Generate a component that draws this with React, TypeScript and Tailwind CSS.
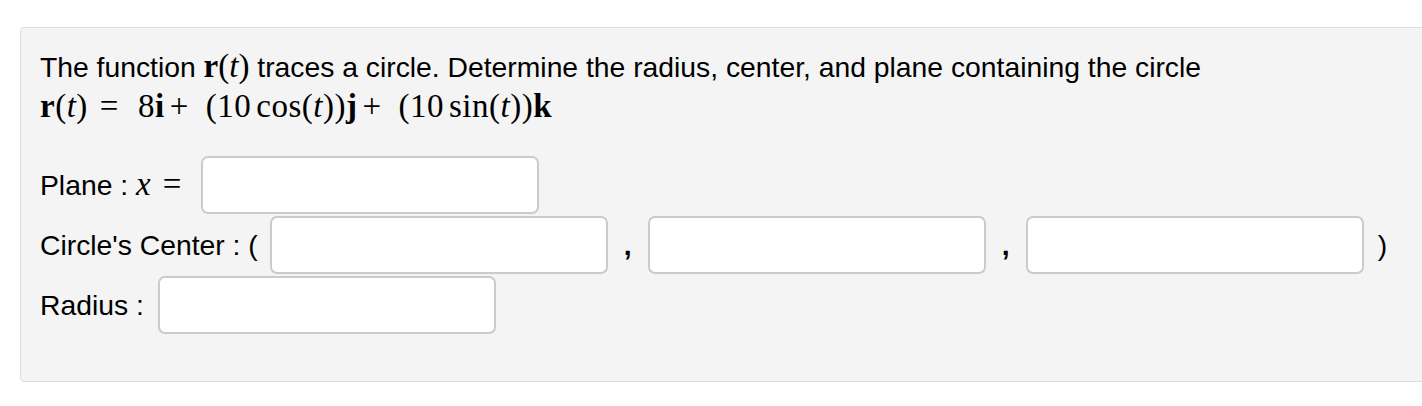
const serif = "font-['Liberation_Serif',serif] text-[33px]"

function Field({ className = '' }: { className?: string }) {
  return (
    <input
      type="text"
      className={`h-[58px] w-[338px] shrink-0 rounded-[7px] border-2 border-[#cbcbcb] bg-white outline-none ${className}`}
    />
  )
}

function Sep({ children }: { children: string }) {
  return <span className="w-[40px] shrink-0 text-center font-bold">{children}</span>
}

export default function App() {
  return (
    <div className="h-[406px] w-[1422px] overflow-hidden bg-white pt-[27px] pl-[20px] font-['Liberation_Sans',Arial,sans-serif] text-[28.3px] text-black">
      <div className="h-[355px] w-[1412px] rounded-[4px] border border-[#dedede] bg-[#f4f4f4] pt-[21px] pl-[19px]">
        <p className="leading-[37px] whitespace-nowrap">
          The function{' '}
          <span className={`${serif} leading-none`}>
            <b>r</b>(<i>t</i>)
          </span>{' '}
          traces a circle. Determine the radius, center, and plane containing the circle
        </p>
        <p className={`${serif} leading-[40px] tracking-[0.5px] whitespace-nowrap`}>
          <b>r</b>(<i>t</i>)<span className="mr-[19px] ml-[12px]">=</span>8<b>i</b>
          <span className="mr-[17px] ml-[5px]">+</span>(10<span className="ml-[5px]">cos</span>(<i>t</i>))<b>j</b>
          <span className="mr-[17px] ml-[5px]">+</span>(10<span className="ml-[5px]">sin</span>(<i>t</i>))<b>k</b>
        </p>

        <div className="mt-[30px] flex flex-col gap-[2px]">
          <div className="flex items-center">
            <span className="whitespace-nowrap">
              Plane : <i className={`${serif} leading-none`}>x</i>
              <span className={`${serif} ml-[12px] leading-none`}>=</span>
            </span>
            <Field className="ml-[20px]" />
          </div>
          <div className="flex items-center">
            <span className="whitespace-nowrap">Circle&apos;s Center : (</span>
            <Field className="ml-[12px]" />
            <Sep>,</Sep>
            <Field />
            <Sep>,</Sep>
            <Field />
            <span className="ml-[14px]">)</span>
          </div>
          <div className="flex items-center">
            <span className="whitespace-nowrap">Radius :</span>
            <Field className="ml-[14px]" />
          </div>
        </div>
      </div>
    </div>
  )
}
